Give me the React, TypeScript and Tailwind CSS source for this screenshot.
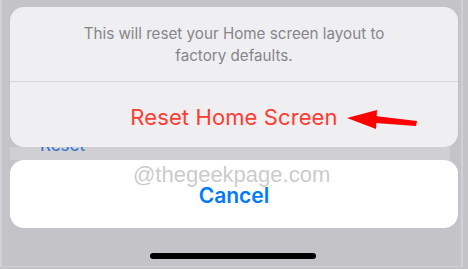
import React from "react";

export default function App() {
  return (
    <div className="w-[468px] h-[269px] bg-[#c4c3c8] overflow-hidden relative" style={{ fontFamily: "Inter, 'Liberation Sans', sans-serif" }}>
      <div className="w-[463px] h-[267px] border-l-2 border-r-2 border-b border-[#d1d0d4] flex flex-col pl-[8px] pr-[3px] pt-[7px]">
        {/* Top action group */}
        <div className="rounded-[14px] bg-[#efeff1] flex flex-col relative z-10">
          <div className="pt-[16px] pb-[14px] px-4 text-center text-[15.2px] leading-[22px] text-[#86868a]">
            This will reset your Home screen layout to<br />factory defaults.
          </div>
          <div className="h-px bg-[#d5d5d8]" />
          <div className="h-[65px] pt-[5px] flex items-center justify-center relative">
            <span className="text-[22px] text-[#ff3b30] tracking-[0.1px]">Reset Home Screen</span>
            <svg className="absolute left-[337px] top-[27px]" width="72" height="24" viewBox="0 0 72 24">
              <polygon points="0,9 30,1 29,20" fill="#ff0000" />
              <polygon points="28,7 70,12 69,17 28,14" fill="#ff0000" />
            </svg>
          </div>
        </div>
        {/* Underlying screen band */}
        <div className="h-[13px] bg-[#d0d0d2] mr-[8px] overflow-hidden">
          <div className="mt-[-10px] pl-[30px] text-[17px] leading-[17px] text-[#2b6fd6]">Reset</div>
        </div>
        {/* Cancel */}
        <div className="h-[68px] rounded-[14px] bg-white flex items-center justify-center relative">
          <span className="text-[21px] font-semibold text-[#007aff] pt-[3px]">Cancel</span>
          <span
            className="absolute left-[123px] top-[2px] text-[22px] leading-[26px] text-[rgba(180,180,180,0.7)]"
            style={{ fontFamily: "'Liberation Sans', Arial, sans-serif" }}
          >
            @thegeekpage.com
          </span>
        </div>
        <div className="flex-1 flex items-start justify-center pt-[25px] pr-[2px]">
          <div className="w-[166px] h-[6px] rounded-full bg-black" />
        </div>
      </div>
    </div>
  );
}
